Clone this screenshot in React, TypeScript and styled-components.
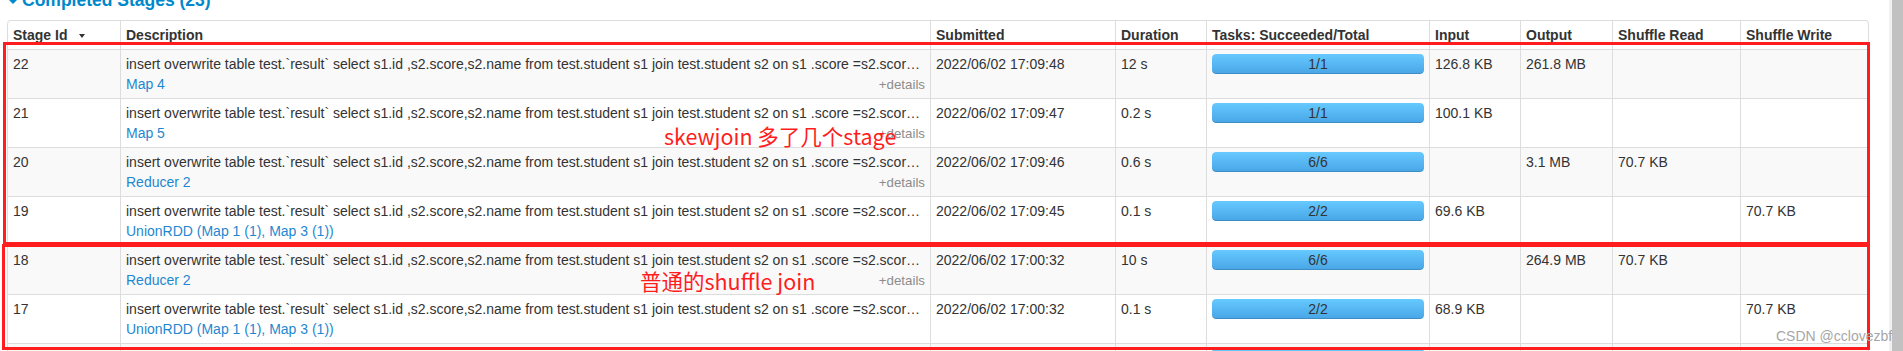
import React, { FC } from 'react'
import styled, { createGlobalStyle } from 'styled-components'

type Stage = {
  id: number
  link: string
  submitted: string
  duration: string
  done: number
  total: number
  input: string
  output: string
  shuffleRead: string
  shuffleWrite: string
  details: boolean
}

// the statement runs past the cell, so it shows up cut with an ellipsis
const QUERY =
  'insert overwrite table test.`result` select s1.id ,s2.score,s2.name from test.student s1 join test.student s2 on s1 .score =s2.score where s1.id is not null'

const UNION = 'UnionRDD (Map 1 (1), Map 3 (1))'

const stages: Stage[] = [
  { id: 22, link: 'Map 4', submitted: '2022/06/02 17:09:48', duration: '12 s', done: 1, total: 1, input: '126.8 KB', output: '261.8 MB', shuffleRead: '', shuffleWrite: '', details: true },
  { id: 21, link: 'Map 5', submitted: '2022/06/02 17:09:47', duration: '0.2 s', done: 1, total: 1, input: '100.1 KB', output: '', shuffleRead: '', shuffleWrite: '', details: true },
  { id: 20, link: 'Reducer 2', submitted: '2022/06/02 17:09:46', duration: '0.6 s', done: 6, total: 6, input: '', output: '3.1 MB', shuffleRead: '70.7 KB', shuffleWrite: '', details: true },
  { id: 19, link: UNION, submitted: '2022/06/02 17:09:45', duration: '0.1 s', done: 2, total: 2, input: '69.6 KB', output: '', shuffleRead: '', shuffleWrite: '70.7 KB', details: false },
  { id: 18, link: 'Reducer 2', submitted: '2022/06/02 17:00:32', duration: '10 s', done: 6, total: 6, input: '', output: '264.9 MB', shuffleRead: '70.7 KB', shuffleWrite: '', details: true },
  { id: 17, link: UNION, submitted: '2022/06/02 17:00:32', duration: '0.1 s', done: 2, total: 2, input: '68.9 KB', output: '', shuffleRead: '', shuffleWrite: '70.7 KB', details: false },
  { id: 16, link: 'Reducer 2', submitted: '2022/06/02 16:58:10', duration: '9 s', done: 6, total: 6, input: '', output: '264.9 MB', shuffleRead: '70.7 KB', shuffleWrite: '', details: true },
]

const columns = [
  { title: 'Stage Id', width: 113, sorted: true },
  { title: 'Description', width: 810 },
  { title: 'Submitted', width: 185 },
  { title: 'Duration', width: 91 },
  { title: 'Tasks: Succeeded/Total', width: 223 },
  { title: 'Input', width: 91 },
  { title: 'Output', width: 92 },
  { title: 'Shuffle Read', width: 128 },
  { title: 'Shuffle Write', width: 128 },
]

const TaskProgress: FC<{ done: number; total: number }> = ({ done, total }) => (
  <Progress>
    <ProgressBar style={{ width: `${(done / total) * 100}%` }} />
    <ProgressLabel>
      {done}/{total}
    </ProgressLabel>
  </Progress>
)

const App: FC = () => {
  return (
    <>
      <GlobalStyle />
      <Page>
        <Main>
          <SectionTitle>
            <Arrow />
            Completed Stages (23)
          </SectionTitle>
          <StageTable>
            <thead>
              <tr>
                {columns.map((c) => (
                  <HeadCell key={c.title} $w={c.width}>
                    {c.title}
                    {c.sorted && <SortArrow />}
                  </HeadCell>
                ))}
              </tr>
            </thead>
            <tbody>
              {stages.map((s, i) => (
                <Row key={s.id} $striped={i % 2 === 0}>
                  <Cell>{s.id}</Cell>
                  <Cell>
                    <Query>{QUERY}</Query>
                    <LinkLine>
                      <StageLink href="#">{s.link}</StageLink>
                      {s.details && <Details>+details</Details>}
                    </LinkLine>
                  </Cell>
                  <Cell>{s.submitted}</Cell>
                  <Cell>{s.duration}</Cell>
                  <Cell>
                    <TaskProgress done={s.done} total={s.total} />
                  </Cell>
                  <Cell>{s.input}</Cell>
                  <Cell>{s.output}</Cell>
                  <Cell>{s.shuffleRead}</Cell>
                  <Cell>{s.shuffleWrite}</Cell>
                </Row>
              ))}
            </tbody>
          </StageTable>
        </Main>
        <ScrollTrack>
          <ScrollThumb />
        </ScrollTrack>

        <RedBox $top={42} $left={3} $width={1867} $height={203} />
        <RedBox $top={244} $left={2} $width={1868} $height={106} />
        <Note $top={125} $left={664}>
          skewjoin 多了几个stage
        </Note>
        <Note $top={270} $left={640}>
          普通的shuffle join
        </Note>
        <Watermark>CSDN @cclovezbf</Watermark>
      </Page>
    </>
  )
}

export default App

const GlobalStyle = createGlobalStyle`
  html, body {
    margin: 0;
    padding: 0;
    background: #fff;
    overflow: hidden;
  }
  body {
    font-family: 'Liberation Sans', Arial, sans-serif;
    font-size: 14px;
    line-height: 20px;
    color: #333;
  }
  * {
    box-sizing: border-box;
  }
`

const Page = styled.div`
  position: relative;
  display: flex;
  width: 1903px;
  height: 351px;
  overflow: hidden;
`

const Main = styled.main`
  flex: 1;
  min-width: 0;
  padding: 0 20px 0 7px;
`

const SectionTitle = styled.h4`
  margin: -10px 0 10px;
  font-size: 17.5px;
  line-height: 20px;
  font-weight: bold;
  color: #0088cc;
  white-space: nowrap;
`

const Arrow = styled.span`
  display: inline-block;
  width: 0;
  height: 0;
  margin: 0 4px 2px 1px;
  border-left: 5px solid transparent;
  border-right: 5px solid transparent;
  border-top: 5px solid #0088cc;
`

const StageTable = styled.table`
  width: 100%;
  table-layout: fixed;
  border-collapse: separate;
  border-spacing: 0;
  border: 1px solid #ddd;
  border-left: 0;
  border-radius: 4px;
`

const HeadCell = styled.th<{ $w: number }>`
  width: ${({ $w }) => $w}px;
  padding: 4px 5px;
  text-align: left;
  font-weight: bold;
  line-height: 20px;
  white-space: nowrap;
  overflow: hidden;
  border-left: 1px solid #ddd;

  &:first-child {
    border-top-left-radius: 4px;
  }
`

const SortArrow = styled.span`
  display: inline-block;
  width: 0;
  height: 0;
  margin: 0 0 2px 12px;
  border-left: 3px solid transparent;
  border-right: 3px solid transparent;
  border-top: 4px solid #333;
`

const Row = styled.tr<{ $striped: boolean }>`
  background: ${({ $striped }) => ($striped ? '#f9f9f9' : '#fff')};
`

const Cell = styled.td`
  padding: 4px 5px;
  vertical-align: top;
  line-height: 20px;
  border-left: 1px solid #ddd;
  border-top: 1px solid #ddd;
  white-space: nowrap;
  overflow: hidden;
`

const Query = styled.div`
  overflow: hidden;
  text-overflow: ellipsis;
  white-space: nowrap;
`

const LinkLine = styled.div`
  display: flex;
  justify-content: space-between;
  align-items: baseline;
  height: 20px;
`

const StageLink = styled.a`
  color: #1f87d0;
  text-decoration: none;
`

const Details = styled.span`
  font-size: 13.3px;
  color: #8c8c8c;
`

const Progress = styled.div`
  position: relative;
  height: 20px;
  border-radius: 4px;
  overflow: hidden;
  background: linear-gradient(to bottom, #f5f5f5, #f9f9f9);
`

const ProgressBar = styled.div`
  height: 100%;
  border-radius: 4px;
  background: linear-gradient(to bottom, #66c9ff, #48a5e6);
  box-shadow: inset 0 -1px 0 rgba(0, 0, 0, 0.15);
`

const ProgressLabel = styled.span`
  position: absolute;
  inset: 0;
  text-align: center;
  line-height: 20px;
  color: #333;
`

const ScrollTrack = styled.div`
  flex: 0 0 14px;
  padding-left: 3px;
  background: #f1f1f1;
`

const ScrollThumb = styled.div`
  height: 100%;
  background: #c1c1c1;
`

const RedBox = styled.div<{ $top: number; $left: number; $width: number; $height: number }>`
  position: absolute;
  top: ${({ $top }) => $top}px;
  left: ${({ $left }) => $left}px;
  width: ${({ $width }) => $width}px;
  height: ${({ $height }) => $height}px;
  border: 3px solid #ff1d1d;
  pointer-events: none;
`

const Note = styled.span<{ $top: number; $left: number }>`
  position: absolute;
  top: ${({ $top }) => $top}px;
  left: ${({ $left }) => $left}px;
  font-family: 'Noto Sans CJK SC', sans-serif;
  font-size: 21.5px;
  line-height: 1;
  color: #ff1d1d;
  white-space: nowrap;
`

const Watermark = styled.span`
  position: absolute;
  top: 329px;
  left: 1776px;
  font-family: 'Liberation Sans', Arial, sans-serif;
  font-size: 14px;
  line-height: 1;
  color: #a6a6a6;
  white-space: nowrap;
`
